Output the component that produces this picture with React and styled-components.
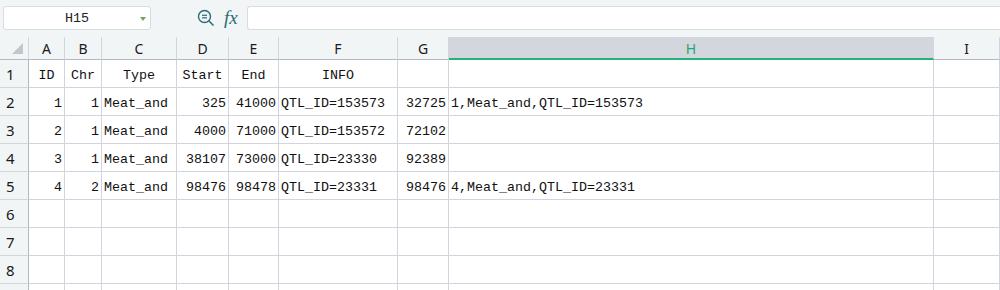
import React from "react";
import styled, { createGlobalStyle } from "styled-components";

const Global = createGlobalStyle`
  html, body { margin: 0; padding: 0; background: #fff; }
  body { font-family: "Liberation Mono", monospace; overflow: hidden; }
`;

const Page = styled.div`
  width: 1000px;
  height: 290px;
  display: flex;
  flex-direction: column;
  background: #f2f5f6;
  overflow: hidden;
`;

const Toolbar = styled.div`
  height: 37px;
  flex-shrink: 0;
  display: flex;
  align-items: flex-start;
  padding: 6px 0 0 3px;
  box-sizing: border-box;
`;

const NameBox = styled.div`
  width: 148px;
  height: 24px;
  box-sizing: border-box;
  background: #fff;
  border: 1px solid #d8dde2;
  border-radius: 3px;
  display: flex;
  align-items: center;
  justify-content: center;
  position: relative;
  font-family: "Liberation Mono", monospace;
  font-size: 13.33px;
  color: #222;
`;

const Caret = styled.span`
  position: absolute;
  right: 4px;
  top: 10px;
  width: 0;
  height: 0;
  border-left: 3px solid transparent;
  border-right: 3px solid transparent;
  border-top: 4px solid #79a05f;
`;

const Tools = styled.div`
  display: flex;
  align-items: center;
  gap: 9px;
  height: 24px;
  margin-left: 46px;
  width: 50px;
`;

const Fx = styled.span`
  font-family: "Liberation Serif", serif;
  font-style: italic;
  font-size: 19px;
  color: #2e6a77;
  line-height: 1;
  margin-top: -2px;
`;

const FormulaInput = styled.div`
  flex: 1;
  height: 24px;
  box-sizing: border-box;
  background: #fff;
  border: 1px solid #d8dde2;
  border-right: none;
  border-radius: 3px 0 0 3px;
`;

const Grid = styled.div`
  flex-shrink: 0;
  display: grid;
  grid-template-columns: 29px 36px 37px 75px 52px 50px 119px 51px 485px 1fr;
  grid-auto-rows: 28px;
  grid-template-rows: 23px;
`;

const Cell = styled.div`
  box-sizing: border-box;
  background: #fff;
  border-right: 1px solid #d2d5df;
  border-bottom: 1px solid #d2d5df;
  font-family: "Liberation Mono", monospace;
  font-size: 13.33px;
  color: #111;
  display: flex;
  align-items: center;
  padding: 3px 2px 0 2px;
  white-space: nowrap;
  overflow: visible;
  justify-content: ${(p) =>
    p.$align === "right" ? "flex-end" : p.$align === "center" ? "center" : "flex-start"};
`;

const ColHead = styled.div`
  box-sizing: border-box;
  background: ${(p) => (p.$active ? "#d3d6dd" : "#f2f5f6")};
  border-right: 1px solid ${(p) => (p.$active ? "#d3d6dd" : "#d2d5df")};
  border-bottom: ${(p) => (p.$active ? "2px solid #22b47d" : "1px solid #b4b8c2")};
  font-family: "Noto Sans", sans-serif;
  font-size: 14px;
  color: ${(p) => (p.$active ? "#22a672" : "#1a1a1a")};
  display: flex;
  align-items: center;
  justify-content: center;
  padding-top: ${(p) => (p.$active ? "1px" : "0")};
`;

const Corner = styled.div`
  box-sizing: border-box;
  background: #f2f5f6;
  border-right: 1px solid #d2d5df;
  border-bottom: 1px solid #b4b8c2;
  position: relative;
`;

const Tri = styled.span`
  position: absolute;
  left: 12px;
  top: 6px;
  width: 0;
  height: 0;
  border-left: 11px solid transparent;
  border-bottom: 11px solid #c3c6c6;
`;

const RowHead = styled.div`
  box-sizing: border-box;
  background: #f2f5f6;
  border-right: 1px solid #b4b8c2;
  border-bottom: 1px solid #d2d5df;
  font-family: "Noto Sans", sans-serif;
  font-size: 15px;
  color: #1a1a1a;
  display: flex;
  align-items: center;
  padding: 1px 0 0 6px;
`;

const cols = ["A", "B", "C", "D", "E", "F", "G", "H", "I"];

const rows = [
  [["ID", "c"], ["Chr", "c"], ["Type", "c"], ["Start", "c"], ["End", "c"], ["INFO", "c"], ["", "l"], ["", "l"], ["", "l"]],
  [["1", "r"], ["1", "r"], ["Meat_and", "l"], ["325", "r"], ["41000", "r"], ["QTL_ID=153573", "l"], ["32725", "r"], ["1,Meat_and,QTL_ID=153573", "l"], ["", "l"]],
  [["2", "r"], ["1", "r"], ["Meat_and", "l"], ["4000", "r"], ["71000", "r"], ["QTL_ID=153572", "l"], ["72102", "r"], ["", "l"], ["", "l"]],
  [["3", "r"], ["1", "r"], ["Meat_and", "l"], ["38107", "r"], ["73000", "r"], ["QTL_ID=23330", "l"], ["92389", "r"], ["", "l"], ["", "l"]],
  [["4", "r"], ["2", "r"], ["Meat_and", "l"], ["98476", "r"], ["98478", "r"], ["QTL_ID=23331", "l"], ["98476", "r"], ["4,Meat_and,QTL_ID=23331", "l"], ["", "l"]],
];
while (rows.length < 9) rows.push(cols.map(() => ["", "l"]));

const alignMap = { c: "center", r: "right", l: "left" };

export default function App() {
  return (
    <>
      <Global />
      <Page>
        <Toolbar>
          <NameBox>
            H15
            <Caret />
          </NameBox>
          <Tools>
            <svg width="18" height="18" viewBox="0 0 18 18" fill="none" stroke="#2e6a77" strokeWidth="1.4">
              <circle cx="7.5" cy="7.5" r="6" />
              <line x1="11.8" y1="11.8" x2="16.5" y2="16.5" strokeWidth="1.6" />
              <line x1="5" y1="6.3" x2="10" y2="6.3" strokeWidth="1.2" />
              <line x1="5" y1="8.8" x2="10" y2="8.8" strokeWidth="1.2" />
            </svg>
            <Fx>fx</Fx>
          </Tools>
          <FormulaInput />
        </Toolbar>
        <Grid>
          <Corner>
            <Tri />
          </Corner>
          {cols.map((c) => (
            <ColHead key={c} $active={c === "H"}>
              {c}
            </ColHead>
          ))}
          {rows.map((r, i) => (
            <React.Fragment key={i}>
              <RowHead>{i < 8 ? i + 1 : ""}</RowHead>
              {r.map(([t, a], j) => (
                <Cell key={j} $align={alignMap[a]}>
                  {t}
                </Cell>
              ))}
            </React.Fragment>
          ))}
        </Grid>
      </Page>
    </>
  );
}
